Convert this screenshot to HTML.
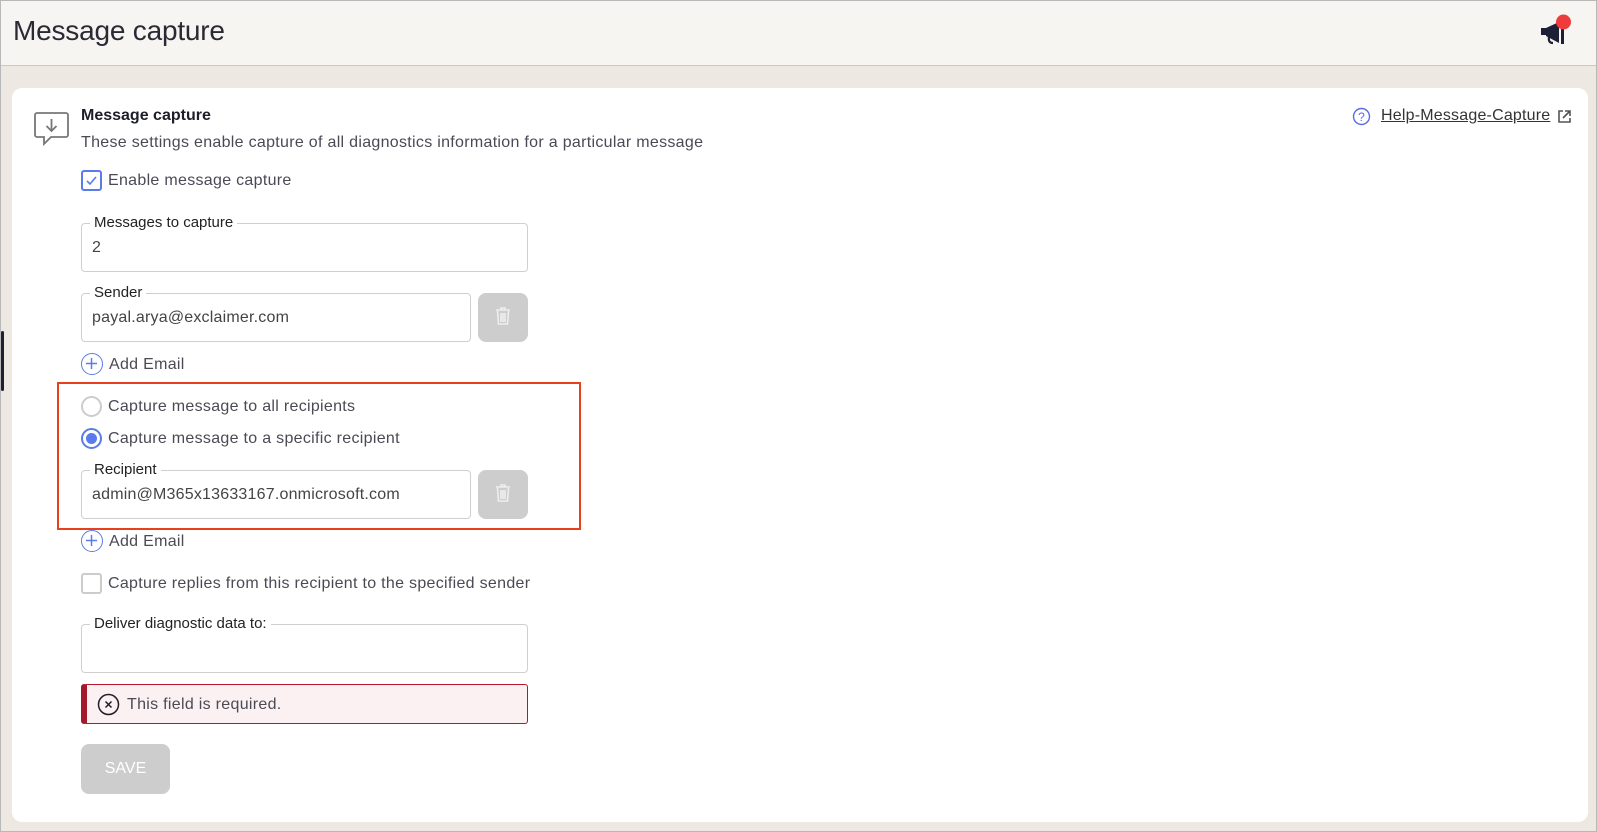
<!DOCTYPE html>
<html><head><meta charset="utf-8"><style>
*{box-sizing:border-box;margin:0;padding:0}
body{width:1597px;height:832px;overflow:hidden;background:#ede8e2;font-family:"Liberation Sans",sans-serif;color:#333;position:relative;border:1px solid #b8b8b8}
.hdr{position:absolute;left:0;top:0;width:1595px;height:65px;background:#f7f5f2;border-bottom:1px solid #c8c8c8}
.hdr h1{position:absolute;left:12px;top:14px;font-size:28px;font-weight:normal;color:#2a2a35;letter-spacing:-0.2px}
.card{position:absolute;left:11px;top:87px;width:1576px;height:734px;background:#fff;border-radius:10px}
.abs{position:absolute}
.t16{font-size:16px;color:#4a4a55;letter-spacing:0.3px}
.fs{position:absolute;border:1px solid #cfcfcf;border-radius:4px;background:#fff}
.fs .lg{position:absolute;top:-10px;left:8px;background:#fff;padding:0 4px;font-size:15px;color:#222;line-height:18px}
.fs .v{position:absolute;left:10px;top:15px;font-size:16px;color:#444;letter-spacing:0.2px}
.trash{position:absolute;width:50px;height:49px;background:#cdcdcd;border-radius:8px}
.plus{position:absolute;width:22px;height:22px;border:1.5px solid #5b7be8;border-radius:50%}
.radio{position:absolute;width:21px;height:21px;border:2px solid #ccc;border-radius:50%}
</style></head><body>
<div class="hdr"><h1>Message capture</h1>
<svg class="abs" style="left:1538px;top:12px" width="40" height="40" viewBox="0 0 40 40"><path d="M2 22h5v-7H2z M7 15l13-6v21L7 23z" fill="#1c1f36"/><path d="M10 24q-1 6 4 6" stroke="#1c1f36" stroke-width="2.2" fill="none"/><rect x="22" y="11" width="3" height="20" fill="#1c1f36"/><circle cx="24.5" cy="9" r="7.5" fill="#ee3b3b"/></svg>
</div>
<div style="position:absolute;left:0;top:330px;width:3px;height:60px;background:#1c1f36;border-radius:2px"></div>
<div class="card"></div>
<svg class="abs" style="left:33px;top:110px" width="36" height="36" viewBox="0 0 36 36"><path d="M3 2h29a2 2 0 0 1 2 2v20a2 2 0 0 1-2 2H17l-7 7v-7H3a2 2 0 0 1-2-2V4a2 2 0 0 1 2-2z" fill="none" stroke="#777" stroke-width="1.8"/><path d="M17.5 8v12M12.5 15l5 5 5-5" fill="none" stroke="#777" stroke-width="1.8"/></svg>
<div class="abs" style="left:80px;top:106px;font-size:16px;font-weight:bold;color:#1e1e2a">Message capture</div>
<div class="abs t16" style="left:80px;top:133px">These settings enable capture of all diagnostics information for a particular message</div>
<svg class="abs" style="left:1351px;top:106px" width="19" height="19"><circle cx="9.5" cy="9.5" r="8" fill="none" stroke="#5b6be0" stroke-width="1.4"/><text x="9.5" y="14" font-size="12" text-anchor="middle" fill="#5b6be0" font-family="Liberation Sans">?</text></svg>
<div class="abs" style="left:1380px;top:106px;font-size:16px;color:#333;text-decoration:underline;letter-spacing:0.2px">Help-Message-Capture</div>
<svg class="abs" style="left:1556px;top:108px" width="15" height="15" viewBox="0 0 15 15"><path d="M6 2H2v11h11V9M8 2h5v5M13 2L6 9" fill="none" stroke="#555" stroke-width="1.6"/></svg>
<div class="abs" style="left:80px;top:169px;width:21px;height:21px;border:2px solid #5b7be8;border-radius:3px"><svg width="17" height="17"><path d="M4 9l3 3 6-7" fill="none" stroke="#5b7be8" stroke-width="1.6"/></svg></div>
<div class="abs t16" style="left:107px;top:171px">Enable message capture</div>
<div class="fs" style="left:80px;top:222px;width:447px;height:49px"><span class="lg">Messages to capture</span><span class="v">2</span></div>
<div class="fs" style="left:80px;top:292px;width:390px;height:49px"><span class="lg">Sender</span><span class="v">payal.arya@exclaimer.com</span></div>
<div class="trash" style="left:477px;top:292px"><svg width="50" height="49"><path d="M18 17h14M23 17v-2h4v2M19.5 18l1 13h9l1-13M23 20v9M25 20v9M27 20v9" fill="none" stroke="#eee" stroke-width="1.6"/></svg></div>
<div class="plus" style="left:80px;top:352px"><svg width="19" height="19"><path d="M9.5 4v11M4 9.5h11" stroke="#5b7be8" stroke-width="1.5"/></svg></div>
<div class="abs t16" style="left:108px;top:355px">Add Email</div>
<div class="abs" style="left:56px;top:381px;width:524px;height:148px;border:2px solid #e8401c"></div>
<div class="radio" style="left:80px;top:395px"></div>
<div class="abs t16" style="left:107px;top:397px">Capture message to all recipients</div>
<div class="radio" style="left:80px;top:427px;border-color:#5b7be8"><div style="position:absolute;left:3px;top:3px;width:11px;height:11px;border-radius:50%;background:#5b7be8"></div></div>
<div class="abs t16" style="left:107px;top:429px">Capture message to a specific recipient</div>
<div class="fs" style="left:80px;top:469px;width:390px;height:49px"><span class="lg">Recipient</span><span class="v">admin@M365x13633167.onmicrosoft.com</span></div>
<div class="trash" style="left:477px;top:469px"><svg width="50" height="49"><path d="M18 17h14M23 17v-2h4v2M19.5 18l1 13h9l1-13M23 20v9M25 20v9M27 20v9" fill="none" stroke="#eee" stroke-width="1.6"/></svg></div>
<div class="plus" style="left:80px;top:529px"><svg width="19" height="19"><path d="M9.5 4v11M4 9.5h11" stroke="#5b7be8" stroke-width="1.5"/></svg></div>
<div class="abs t16" style="left:108px;top:532px">Add Email</div>
<div class="abs" style="left:80px;top:572px;width:21px;height:21px;border:2px solid #ccc;border-radius:3px"></div>
<div class="abs t16" style="left:107px;top:574px">Capture replies from this recipient to the specified sender</div>
<div class="fs" style="left:80px;top:623px;width:447px;height:49px"><span class="lg">Deliver diagnostic data to:</span></div>
<div class="abs" style="left:80px;top:683px;width:447px;height:40px;background:#fbf1f2;border:1px solid #b5172c;border-left:6px solid #a51a2a;border-radius:3px"></div>
<svg class="abs" style="left:96px;top:692px" width="23" height="23"><circle cx="11.5" cy="11.5" r="10" fill="none" stroke="#1e1e2a" stroke-width="1.5"/><path d="M8.5 8.5l6 6M14.5 8.5l-6 6" stroke="#1e1e2a" stroke-width="1.5"/></svg>
<div class="abs t16" style="left:126px;top:695px">This field is required.</div>
<div class="abs" style="left:80px;top:743px;width:89px;height:50px;background:#cdcdcd;border-radius:8px;color:#fff;font-size:16px;text-align:center;line-height:50px">SAVE</div>
</body></html>
